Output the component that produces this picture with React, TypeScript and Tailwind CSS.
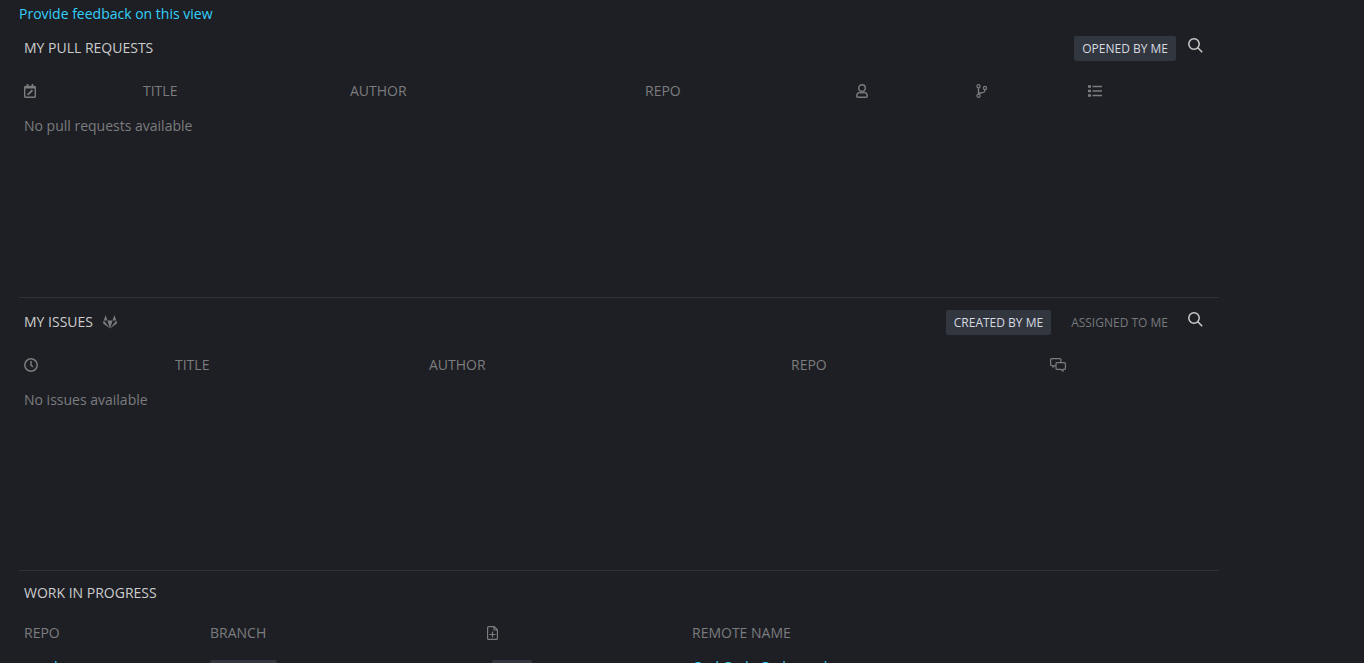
import type { ReactNode } from "react";
import { FaGitlab } from "react-icons/fa";

type IconProps = { label: string; children: ReactNode; className?: string; viewBox?: string };

function Icon({ label, children, className = "h-4 w-4", viewBox = "0 0 16 16" }: IconProps) {
  return (
    <svg role="img" aria-label={label} viewBox={viewBox} className={className} fill="none" stroke="currentColor" strokeWidth="1.2">
      {children}
    </svg>
  );
}

const CalendarIcon = () => (
  <Icon label="Last updated" className="h-[14px] w-3" viewBox="0 0 12 14">
    <path d="M1.6 2.500h8.800q.9 0 .9.9v9q0 .9-.9.9H1.600q-.9 0-.9-.9v-9q0-.9.9-.9Z" strokeWidth="1.400" />
    <path d="M.6 3.400h10.800" strokeWidth="2.200" />
    <path d="M3.500 0v3M8.500 0v3" strokeWidth="1.600" />
    <path d="M3.600 10.900 8.400 6.300" strokeWidth="1.900" />
  </Icon>
);

const UserIcon = () => (
  <Icon label="Assignees" className="h-[14px] w-3" viewBox="0 0 12 14">
    <circle cx="6" cy="4" r="3.300" strokeWidth="1.400" />
    <path d="M3.500 8.400C1.600 8.800.7 10.200.7 12.300q0 1 1 1h8.600q1 0 1-1c0-2.100-.9-3.500-2.800-3.900-1.700.7-3.300.7-5 0Z" strokeWidth="1.400" />
  </Icon>
);

const BranchIcon = () => (
  <Icon label="Commits" className="h-[14px] w-3" viewBox="0 0 12 14">
    <circle cx="2.500" cy="2.300" r="1.600" />
    <circle cx="2.500" cy="11.700" r="1.600" />
    <circle cx="9" cy="4" r="1.600" />
    <path d="M2.500 4v6M9 5.600c0 3-1.500 3-3.500 3.100-1.500.1-3 .3-3 1.300" strokeWidth="1.400" />
  </Icon>
);

const ListIcon = () => (
  <Icon label="Labels" className="h-3 w-[14px]" viewBox="0 0 14 12">
    <path d="M0 1.500h3M0 6h3M0 10.500h3" strokeWidth="2.600" />
    <path d="M4.500 1.500H14M4.500 6H14M4.500 10.500H14" strokeWidth="1.400" />
  </Icon>
);

const ClockIcon = () => (
  <Icon label="Last updated" className="h-[14px] w-[14px]" viewBox="0 0 14 14">
    <circle cx="7" cy="7" r="6.200" strokeWidth="1.500" />
    <path d="M7 3v4.200L9 9" strokeWidth="1.500" />
  </Icon>
);

const CommentsIcon = () => (
  <Icon label="Comments" className="h-[14px] w-4" viewBox="0 0 16 14">
    <path d="M6 7.500H5L3 9V7.500H1.600q-1 0-1-1V1.600q0-1 1-1h8.300q1 0 1 1v2.900" />
    <path d="M7 4.600h7.400q1 0 1 1v4.800q0 1-1 1H13V13l-2.200-1.600H7q-1 0-1-1V5.600q0-1 1-1Z" />
  </Icon>
);

const FileIcon = () => (
  <Icon label="Working changes" className="h-[14px] w-[11px]" viewBox="0 0 11 14">
    <path d="M1.500.6h5.700l3.200 3.200v8.700q0 .9-.9.9h-8q-.9 0-.9-.9v-11q0-.9.9-.9ZM7 .6V4h3.400M5.500 5.500v6M2.500 8.500h6" />
  </Icon>
);

function SearchButton() {
  return (
    <button type="button" aria-label="Search" className="mr-4 mb-[6px] cursor-pointer text-[#cccccc]">
      <svg viewBox="0 0 15 15" className="h-[15px] w-[15px]" fill="none" stroke="currentColor" strokeWidth="1.500">
        <circle cx="6" cy="6" r="5.200" />
        <path d="m9.800 9.800 4.400 4.400" />
      </svg>
    </button>
  );
}

function Tab({ active = false, children }: { active?: boolean; children: ReactNode }) {
  return (
    <button
      type="button"
      aria-pressed={active}
      className={`h-[25px] cursor-pointer rounded-xs px-2 text-xs uppercase ${active ? "bg-[#32363f] text-[#d7dae0]" : "text-[#76787b]"}`}
    >
      {children}
    </button>
  );
}

function Columns({ widths, cells, children }: { widths: string[]; cells: ReactNode[]; children: ReactNode }) {
  return (
    <table className="w-full table-fixed text-left">
      <colgroup>
        {widths.map((w, i) => <col key={i} className={w} />)}
      </colgroup>
      <thead>
        <tr className="h-[35px] uppercase">
          {cells.map((cell, i) => <th key={i} scope="col" className="p-0 font-normal">{cell}</th>)}
        </tr>
      </thead>
      <tbody>{children}</tbody>
    </table>
  );
}

export default function App() {
  return (
    <main className="h-screen overflow-hidden bg-[#1e1f24] pl-[19px] font-['Open_Sans','Noto_Sans',sans-serif] text-sm text-[#7b7c7e]">
      <div className="max-w-[1200px]">
        <a href="#feedback" className="block pt-1 leading-5 text-[#33d0fa]">Provide feedback on this view</a>

        <section className="flex h-[274px] flex-col border-b border-[#303136] pt-3 pl-[5px]">
          <header className="flex h-[25px] items-center">
            <h2 className="pb-[2px] text-[#cccccc] uppercase">My pull requests</h2>
            <div className="ml-auto flex items-center gap-3"><Tab active>Opened by me</Tab><SearchButton /></div>
          </header>
          <div className="pt-3">
            <Columns
              widths={["w-[119px]", "w-[207px]", "w-[295px]", "w-[211px]", "w-[120px]", "w-[112px]", "w-auto"]}
              cells={[<CalendarIcon />, "Title", "Author", "Repo", <UserIcon />, <BranchIcon />, <ListIcon />]}
            >
              <tr className="h-[35px]"><td colSpan={7} className="p-0">No pull requests available</td></tr>
            </Columns>
          </div>
        </section>

        <section className="flex h-[273px] flex-col border-b border-[#303136] pt-3 pl-[5px]">
          <header className="flex h-[25px] items-center">
            <h2 className="flex items-center gap-[10px] pb-[2px] text-[#cccccc] uppercase">
              My issues
              <FaGitlab role="img" aria-label="GitLab" className="h-[14px] w-[14px] text-[#7b7c7e]" />
            </h2>
            <div className="ml-auto flex items-center gap-3"><Tab active>Created by me</Tab><Tab>Assigned to me</Tab><SearchButton /></div>
          </header>
          <div className="pt-3">
            <Columns
              widths={["w-[151px]", "w-[254px]", "w-[362px]", "w-[259px]", "w-auto"]}
              cells={[<ClockIcon />, "Title", "Author", "Repo", <CommentsIcon />]}
            >
              <tr className="h-[35px]"><td colSpan={5} className="p-0">No issues available</td></tr>
            </Columns>
          </div>
        </section>

        <section className="pt-3 pl-[5px]">
          <h2 className="leading-5 text-[#cccccc] uppercase">Work in progress</h2>
          <div className="pt-3">
            <Columns
              widths={["w-[186px]", "w-[277px]", "w-[205px]", "w-auto"]}
              cells={["Repo", "Branch", <FileIcon />, "Remote name"]}
            >
              <tr className="h-[35px] align-top">
                <td className="p-0 pt-[7px]"><a href="#repo" className="text-[#33d0fa]">word</a></td>
                <td className="p-0 pt-[10px]"><span className="block h-[22px] w-[67px] rounded-xs bg-[#32363f]" /></td>
                <td className="p-0 pt-[10px] pl-[5px]"><span className="block h-[22px] w-10 rounded-xs bg-[#32363f]" /></td>
                <td className="p-0 pt-[7px]"><a href="#remote" className="text-[#33d0fa]">God Code Codeword</a></td>
              </tr>
            </Columns>
          </div>
        </section>
      </div>
    </main>
  );
}
